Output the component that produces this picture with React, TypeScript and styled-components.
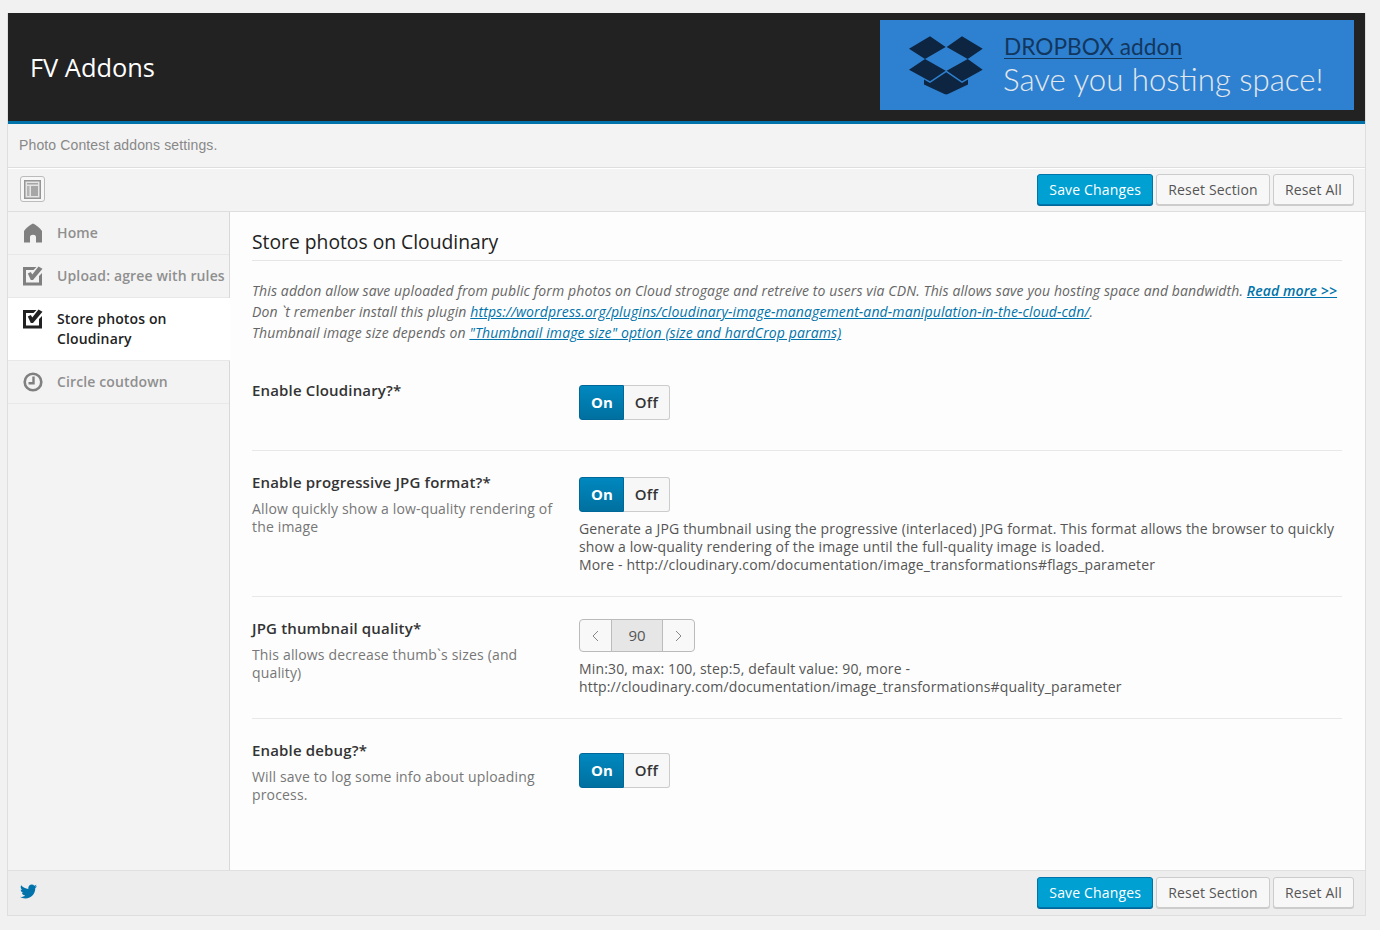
import React, { FC } from 'react';
import styled, { createGlobalStyle } from 'styled-components';
import { FaTwitter } from 'react-icons/fa';

const GlobalStyle = createGlobalStyle`
    html, body {
        margin: 0;
        padding: 0;
        background: #f1f1f1;
        font-family: 'Open Sans', sans-serif;
        color: #444;
    }
`;

const Page = styled.div`
    width: 1380px;
    height: 930px;
    padding: 13px 14px 0 7px;
    box-sizing: border-box;
`;

const Panel = styled.div`
    height: 903px;
    display: flex;
    flex-direction: column;
    border: 1px solid #dedede;
    border-top: 0;
    background: #f3f3f3;
    box-sizing: border-box;
`;

const Header = styled.header`
    height: 111px;
    box-sizing: border-box;
    flex: none;
    background: #222;
    border-bottom: 3px solid #0073aa;
    display: flex;
    align-items: flex-start;
    justify-content: space-between;
    padding: 7px 11px 0 22px;
`;

const Title = styled.h1`
    margin: 0;
    padding-top: 26px;
    font-size: 25.4px;
    line-height: 42px;
    font-weight: 400;
    color: #fff;
`;

const Banner = styled.div`
    width: 474px;
    height: 90px;
    background: #2e81d1;
    display: flex;
    box-sizing: border-box;
    padding: 16px 0 0 29px;
`;

const BannerText = styled.div`
    margin-left: 21px;
    margin-top: -2px;
    font-family: 'Lato', sans-serif;
`;

const BannerLink = styled.div`
    font-size: 22.700px;
    line-height: 26px;
    color: #12375e;
    text-decoration: underline;
    text-decoration-thickness: 1px;
    text-underline-offset: 3px;
`;

const BannerSlogan = styled.div`
    margin-left: -1px;
    font-size: 31.200px;
    line-height: 38px;
    font-weight: 300;
    color: #e4e8ec;
`;

const Subtitle = styled.div`
    height: 44px;
    flex: none;
    box-sizing: border-box;
    padding: 13px 11px 0;
    font-family: 'Liberation Sans', sans-serif;
    font-size: 14px;
    letter-spacing: 0.13px;
    line-height: 16px;
    color: #888;
    border-bottom: 1px solid #dedede;
`;

const Toolbar = styled.div<{ $bottom?: boolean }>`
    flex: none;
    box-sizing: border-box;
    height: ${(p) => (p.$bottom ? '45px' : '44px')};
    display: flex;
    align-items: center;
    justify-content: space-between;
    padding: 0 11px ${(p) => (p.$bottom ? '1px' : '2px')} 12px;
    background: ${(p) => (p.$bottom ? '#ededed' : '#f3f3f3')};
    border-top: ${(p) => (p.$bottom ? '1px solid #e0e0e0' : '1px solid #fff')};
    border-bottom: ${(p) => (p.$bottom ? '0' : '1px solid #dedede')};
`;

const LayoutToggle = styled.div`
    width: 25px;
    height: 26px;
    box-sizing: border-box;
    border: 1px solid #bbb;
    border-radius: 3px;
    background: #f7f7f7;
    display: flex;
    align-items: center;
    justify-content: center;
`;

const Actions = styled.div`
    display: flex;
    gap: 3px;
`;

const Button = styled.button<{ $primary?: boolean }>`
    height: 31px;
    box-sizing: border-box;
    padding: 0 11px;
    border-radius: 3px;
    font-family: 'Open Sans', sans-serif;
    font-size: 14px;
    letter-spacing: 0.17px;
    border: 1px solid ${(p) => (p.$primary ? '#0073aa' : '#ccc')};
    background: ${(p) => (p.$primary ? '#00a0d2' : '#f7f7f7')};
    color: ${(p) => (p.$primary ? '#fff' : '#555')};
    box-shadow: 0 1px 0 ${(p) => (p.$primary ? '#006799' : '#ccc')};
`;

const Body = styled.div`
    flex: 1;
    display: flex;
    min-height: 0;
`;

const Sidebar = styled.nav`
    width: 221px;
    flex: none;
    border-right: 1px solid #d8d8d8;
    box-sizing: content-box;
`;

const NavItem = styled.div<{ $active?: boolean; $height: number }>`
    height: ${(p) => p.$height}px;
    box-sizing: border-box;
    display: flex;
    align-items: flex-start;
    padding: 11px 0 0 15px;
    border-bottom: 1px solid #e8e8e8;
    background: ${(p) => (p.$active ? '#fff' : 'transparent')};
    margin-right: ${(p) => (p.$active ? '-1px' : '0')};
    position: relative;
`;

const NavIcon = styled.span`
    width: 22px;
    height: 22px;
    flex: none;
    display: block;
`;

const NavLabel = styled.span<{ $active?: boolean }>`
    margin-left: 12px;
    font-size: 14px;
    letter-spacing: 0.13px;
    line-height: 20px;
    font-weight: 600;
    color: ${(p) => (p.$active ? '#222' : '#8f8f8f')};
    white-space: pre-line;
`;

const Content = styled.main`
    flex: 1;
    background: #fdfdfd;
    padding: 15px 23px 0 22px;
    min-width: 0;
`;

const SectionTitle = styled.h2`
    margin: 0;
    padding-bottom: 4px;
    border-bottom: 1px solid #e5e5e5;
    font-size: 19.3px;
    line-height: 29px;
    font-weight: 400;
    color: #222;
`;

const Intro = styled.p`
    margin: 19px 0 0;
    font-size: 14px;
    letter-spacing: 0.12px;
    line-height: 21px;
    font-style: italic;
    color: #666;

    a {
        color: #0073aa;
        text-decoration: underline;
    }

    b {
        font-weight: 600;
    }
`;

const Row = styled.section<{ $height: number; $last?: boolean }>`
    height: ${(p) => p.$height}px;
    box-sizing: border-box;
    display: flex;
    border-bottom: ${(p) => (p.$last ? '0' : '1px solid #e8e8e8')};
`;

const RowLabel = styled.div<{ $top: number }>`
    width: 327px;
    flex: none;
    padding-top: ${(p) => p.$top}px;
`;

const RowName = styled.div`
    font-size: 15px;
    letter-spacing: 0.16px;
    line-height: 22px;
    font-weight: 600;
    color: #333;
`;

const RowHint = styled.div`
    margin-top: 7px;
    width: 310px;
    font-size: 14px;
    letter-spacing: 0.16px;
    line-height: 18px;
    color: #777;
`;

const RowControl = styled.div<{ $top: number }>`
    flex: 1;
    padding-top: ${(p) => p.$top}px;
`;

const Toggle = styled.div`
    display: inline-flex;
    vertical-align: top;
    height: 35px;
`;

const ToggleOn = styled.div`
    width: 45px;
    box-sizing: border-box;
    padding-left: 1px;
    border-radius: 3px 0 0 3px;
    border: 1px solid #006799;
    background: linear-gradient(#0088bf, #00709f);
    color: #fff;
    font-size: 15px;
    font-weight: 700;
    letter-spacing: 0.2px;
    text-align: center;
    line-height: 32px;
`;

const ToggleOff = styled.div`
    width: 46px;
    box-sizing: border-box;
    border-radius: 0 3px 3px 0;
    border: 1px solid #ccc;
    border-left: 0;
    background: #f7f7f7;
    color: #333;
    font-size: 15px;
    font-weight: 600;
    letter-spacing: 0.2px;
    text-align: center;
    line-height: 32px;
`;

const ControlNote = styled.div`
    margin-top: 8px;
    font-size: 14px;
    letter-spacing: 0.15px;
    line-height: 18px;
    color: #555;
`;

const Stepper = styled.div`
    width: 116px;
    height: 33px;
    box-sizing: border-box;
    display: flex;
    border: 1px solid #bbb;
    border-radius: 4px;
    background: #f8f8f8;
    overflow: hidden;
`;

const StepperArrow = styled.div`
    width: 31px;
    flex: none;
    display: flex;
    align-items: center;
    justify-content: center;
`;

const StepperValue = styled.div`
    flex: 1;
    background: #e6e6e6;
    border-left: 1px solid #bbb;
    border-right: 1px solid #bbb;
    text-align: center;
    font-size: 15px;
    line-height: 31px;
    color: #555;
`;

const TwitterLink = styled.a`
    display: flex;
    color: #0073aa;
    margin-top: -2px;
`;

const Dropbox = () => (
    <svg width="74" height="59" viewBox="0 0 74 59" fill="#0d2540">
        <path d="M0 12.700 L21 0.300 L36.700 11 L16 23 Z" />
        <path d="M37.700 11 L53 0.300 L73.700 12.700 L58.700 23 Z" />
        <path d="M0 33.700 L16 23 L36.700 34.700 L21 45.300 Z" />
        <path d="M37.700 34.700 L58.700 23 L73.700 33.700 L53 45.300 Z" />
        <path d="M37.200 36.300 L53 47 L59 43.500 V48.500 L39 58 Q37.200 58.800 35.400 58 L15 48.500 V43.500 L21 47 Z" />
    </svg>
);

const LayoutIcon = () => (
    <svg width="17" height="19" viewBox="0 0 17 19">
        <rect x="0" y="0" width="17" height="19" fill="#969696" />
        <rect x="1.500" y="1.500" width="14" height="16" fill="#e4e4e4" />
        <rect x="3" y="3" width="11" height="1.500" fill="#a6a6a6" />
        <rect x="3" y="6" width="2.500" height="10" fill="#b4b4b4" />
        <rect x="7" y="6" width="7" height="10" fill="#a6a6a6" />
    </svg>
);

const HomeIcon: FC<{ color: string }> = ({ color }) => (
    <svg width="20" height="20" viewBox="0 0 20 20" fill={color}>
        <path d="M10 0.500 C7 2 3.500 4.500 1 8 V19.500 H7 V14 C7 11 13 11 13 14 V19.500 H19 V8 C16.500 4.500 13 2 10 0.500 Z" />
    </svg>
);

const CheckIcon: FC<{ color: string }> = ({ color }) => (
    <svg width="20" height="20" viewBox="0 0 20 20" fill={color}>
        <path d="M0 1 H13.500 L10.500 4 H3 V16.500 H16 V10 L19 7 V19.500 H0 Z" />
        <path d="M4.800 7.500 L7.800 6 L9.300 8.400 L15.500 0.500 L19.500 2.800 L10 14 H7.800 Z" />
    </svg>
);

const ClockIcon: FC<{ color: string }> = ({ color }) => (
    <svg width="20" height="20" viewBox="0 0 20 20">
        <circle cx="10" cy="10" r="8.300" fill="none" stroke={color} strokeWidth="2.600" />
        <path d="M10.500 4.500 V11.300 H5.500" fill="none" stroke={color} strokeWidth="2.400" />
    </svg>
);

const Chevron: FC<{ left?: boolean }> = ({ left }) => (
    <svg width="7" height="12" viewBox="0 0 7 12" fill="none" stroke="#888" strokeWidth="1">
        <path d={left ? 'M6 1 L1 6 L6 11' : 'M1 1 L6 6 L1 11'} />
    </svg>
);

const Switch = () => (
    <Toggle>
        <ToggleOn>On</ToggleOn>
        <ToggleOff>Off</ToggleOff>
    </Toggle>
);

const ToolbarActions = () => (
    <Actions>
        <Button $primary>Save Changes</Button>
        <Button>Reset Section</Button>
        <Button>Reset All</Button>
    </Actions>
);

export default function App() {
    return (
        <Page>
            <GlobalStyle />
            <Panel>
                <Header>
                    <Title>FV Addons</Title>
                    <Banner>
                        <Dropbox />
                        <BannerText>
                            <BannerLink>DROPBOX addon</BannerLink>
                            <BannerSlogan>Save you hosting space!</BannerSlogan>
                        </BannerText>
                    </Banner>
                </Header>
                <Subtitle>Photo Contest addons settings.</Subtitle>
                <Toolbar>
                    <LayoutToggle>
                        <LayoutIcon />
                    </LayoutToggle>
                    <ToolbarActions />
                </Toolbar>
                <Body>
                    <Sidebar>
                        <NavItem $height={43}>
                            <NavIcon>
                                <HomeIcon color="#808080" />
                            </NavIcon>
                            <NavLabel>Home</NavLabel>
                        </NavItem>
                        <NavItem $height={43}>
                            <NavIcon>
                                <CheckIcon color="#808080" />
                            </NavIcon>
                            <NavLabel>Upload: agree with rules</NavLabel>
                        </NavItem>
                        <NavItem $height={63} $active>
                            <NavIcon>
                                <CheckIcon color="#222" />
                            </NavIcon>
                            <NavLabel $active>{'Store photos on\nCloudinary'}</NavLabel>
                        </NavItem>
                        <NavItem $height={43}>
                            <NavIcon>
                                <ClockIcon color="#808080" />
                            </NavIcon>
                            <NavLabel>Circle coutdown</NavLabel>
                        </NavItem>
                    </Sidebar>
                    <Content>
                        <SectionTitle>Store photos on Cloudinary</SectionTitle>
                        <Intro>
                            This addon allow save uploaded from public form photos on Cloud strogage and retreive to users via CDN. This allows save you hosting space and bandwidth. <a href="#"><b>Read more &gt;&gt;</b></a>
                            <br />
                            Don `t remenber install this plugin <a href="#">https://wordpress.org/plugins/cloudinary-image-management-and-manipulation-in-the-cloud-cdn/</a>.
                            <br />
                            Thumbnail image size depends on <a href="#">"Thumbnail image size" option (size and hardCrop params)</a>
                        </Intro>
                        <Row $height={108}>
                            <RowLabel $top={36}>
                                <RowName>Enable Cloudinary?*</RowName>
                            </RowLabel>
                            <RowControl $top={42}>
                                <Switch />
                            </RowControl>
                        </Row>
                        <Row $height={146}>
                            <RowLabel $top={20}>
                                <RowName>Enable progressive JPG format?*</RowName>
                                <RowHint>Allow quickly show a low-quality rendering of the image</RowHint>
                            </RowLabel>
                            <RowControl $top={26}>
                                <Switch />
                                <ControlNote>
                                    Generate a JPG thumbnail using the progressive (interlaced) JPG format. This format allows the browser to quickly show a low-quality rendering of the image until the full-quality image is loaded.
                                    <br />
                                    More - http://cloudinary.com/documentation/image_transformations#flags_parameter
                                </ControlNote>
                            </RowControl>
                        </Row>
                        <Row $height={122}>
                            <RowLabel $top={20}>
                                <RowName>JPG thumbnail quality*</RowName>
                                <RowHint>This allows decrease thumb`s sizes (and quality)</RowHint>
                            </RowLabel>
                            <RowControl $top={22}>
                                <Stepper>
                                    <StepperArrow>
                                        <Chevron left />
                                    </StepperArrow>
                                    <StepperValue>90</StepperValue>
                                    <StepperArrow>
                                        <Chevron />
                                    </StepperArrow>
                                </Stepper>
                                <ControlNote>
                                    Min:30, max: 100, step:5, default value: 90, more -
                                    <br />
                                    http://cloudinary.com/documentation/image_transformations#quality_parameter
                                </ControlNote>
                            </RowControl>
                        </Row>
                        <Row $height={120} $last>
                            <RowLabel $top={20}>
                                <RowName>Enable debug?*</RowName>
                                <RowHint>Will save to log some info about uploading process.</RowHint>
                            </RowLabel>
                            <RowControl $top={34}>
                                <Switch />
                            </RowControl>
                        </Row>
                    </Content>
                </Body>
                <Toolbar $bottom>
                    <TwitterLink>
                        <FaTwitter size={17} />
                    </TwitterLink>
                    <ToolbarActions />
                </Toolbar>
            </Panel>
        </Page>
    );
}
